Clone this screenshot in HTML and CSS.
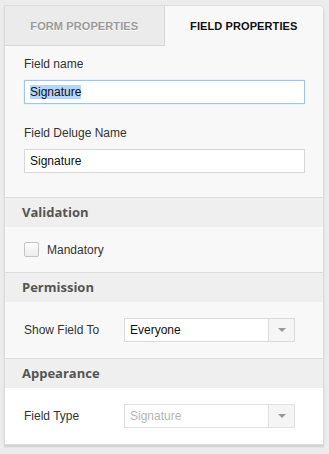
FILE: index.html
```html
<!DOCTYPE html>
<html>
<head>
<meta charset="utf-8">
<link rel="stylesheet" href="styles.css">
</head>
<body>
<div class="panel">
  <div class="tabs">
    <div class="tab tab-off">FORM PROPERTIES</div>
    <div class="tab tab-on">FIELD PROPERTIES</div>
  </div>
  <div class="sec sec-top">
    <label class="lbl">Field name</label>
    <div class="input input-focus"><span class="sel">Signature</span></div>
    <label class="lbl lbl2">Field Deluge Name</label>
    <div class="input">Signature</div>
  </div>
  <div class="head">Validation</div>
  <div class="sec sec-check">
    <span class="box"></span><span class="check-lbl">Mandatory</span>
  </div>
  <div class="head">Permission</div>
  <div class="sec sec-row">
    <span class="row-lbl">Show Field To</span>
    <div class="select"><span class="sel-text">Everyone</span><span class="arrow"><span class="tri"></span></span></div>
  </div>
  <div class="head">Appearance</div>
  <div class="sec sec-row sec-white">
    <span class="row-lbl">Field Type</span>
    <div class="select disabled"><span class="sel-text">Signature</span><span class="arrow"><span class="tri"></span></span></div>
  </div>
</div>
</body>
</html>
```
FILE: styles.css
```css
html, body { margin: 0; padding: 0; }
body {
  background: #ececec;
  font-family: "Liberation Sans", Arial, sans-serif;
  width: 329px;
  height: 454px;
  overflow: hidden;
}
.panel {
  margin: 5px 0 0 4px;
  width: 318px;
  background: #f8f8f8;
  border: 1px solid #dcdcdc;
  border-radius: 0 5px 0 0;
  box-shadow: 0 2px 2px rgba(0,0,0,0.12);
  overflow: hidden;
}
.tabs { display: flex; height: 40px; }
.tab {
  flex: 1;
  display: flex;
  align-items: center;
  justify-content: center;
  font-size: 11px;
  font-weight: bold;
  letter-spacing: 0.1px;
}
.tab-off {
  background: #ebebeb;
  color: #9a9a9a;
  border-right: 1px solid #d8d8d8;
  border-bottom: 1px solid #d8d8d8;
  text-shadow: 0 1px 0 #fff;
}
.tab-on { color: #111; background: #f8f8f8; }
.sec { padding: 0 18px 0 19px; }
.sec-top { padding-top: 11px; padding-bottom: 24px; }
.lbl { display: block; font-size: 12px; color: #333; line-height: 14px; }
.lbl2 { margin-top: 22px; }
.input {
  margin-top: 9px;
  height: 22px;
  border: 1px solid #d8d8d8;
  background: #fff;
  font-size: 12px;
  color: #111;
  line-height: 22px;
  padding-left: 5px;
}
.input-focus { border-color: #9cc6ee; box-shadow: 0 0 1px #bcd8f4; }
.sel { background: #b4d5fd; }
.head {
  height: 29px;
  line-height: 29px;
  background: #efefef;
  border-top: 1px solid #dcdcdc;
  padding-left: 17px;
  font-family: "Open Sans", "Liberation Sans", sans-serif;
  font-weight: bold;
  font-size: 13px;
  color: #555;
}
.sec-check {
  display: flex;
  align-items: center;
  height: 45px;
}
.box {
  width: 13px;
  height: 13px;
  border: 1px solid #c4c4c4;
  border-radius: 2px;
  background: linear-gradient(#fdfdfd, #ededed);
}
.check-lbl { margin-left: 8px; font-size: 12px; color: #333; }
.sec-row {
  display: flex;
  align-items: center;
  height: 56px;
}
.sec-white { background: #fff; }
.row-lbl { width: 100px; font-size: 12px; color: #333; }
.select {
  display: flex;
  width: 169px;
  height: 22px;
  border: 1px solid #dadada;
  background: #fff;
  font-size: 12px;
  color: #111;
}
.sel-text { flex: 1; line-height: 22px; padding-left: 5px; }
.arrow {
  width: 25px;
  border-left: 1px solid #dadada;
  background: #f5f5f5;
  display: flex;
  align-items: center;
  justify-content: center;
}
.tri {
  width: 0; height: 0;
  border-left: 4px solid transparent;
  border-right: 4px solid transparent;
  border-top: 4px solid #999;
}
.disabled .sel-text { color: #b5b5b5; }
.disabled { border-color: #e2e2e2; }
.disabled .arrow { border-left-color: #e2e2e2; }
```
